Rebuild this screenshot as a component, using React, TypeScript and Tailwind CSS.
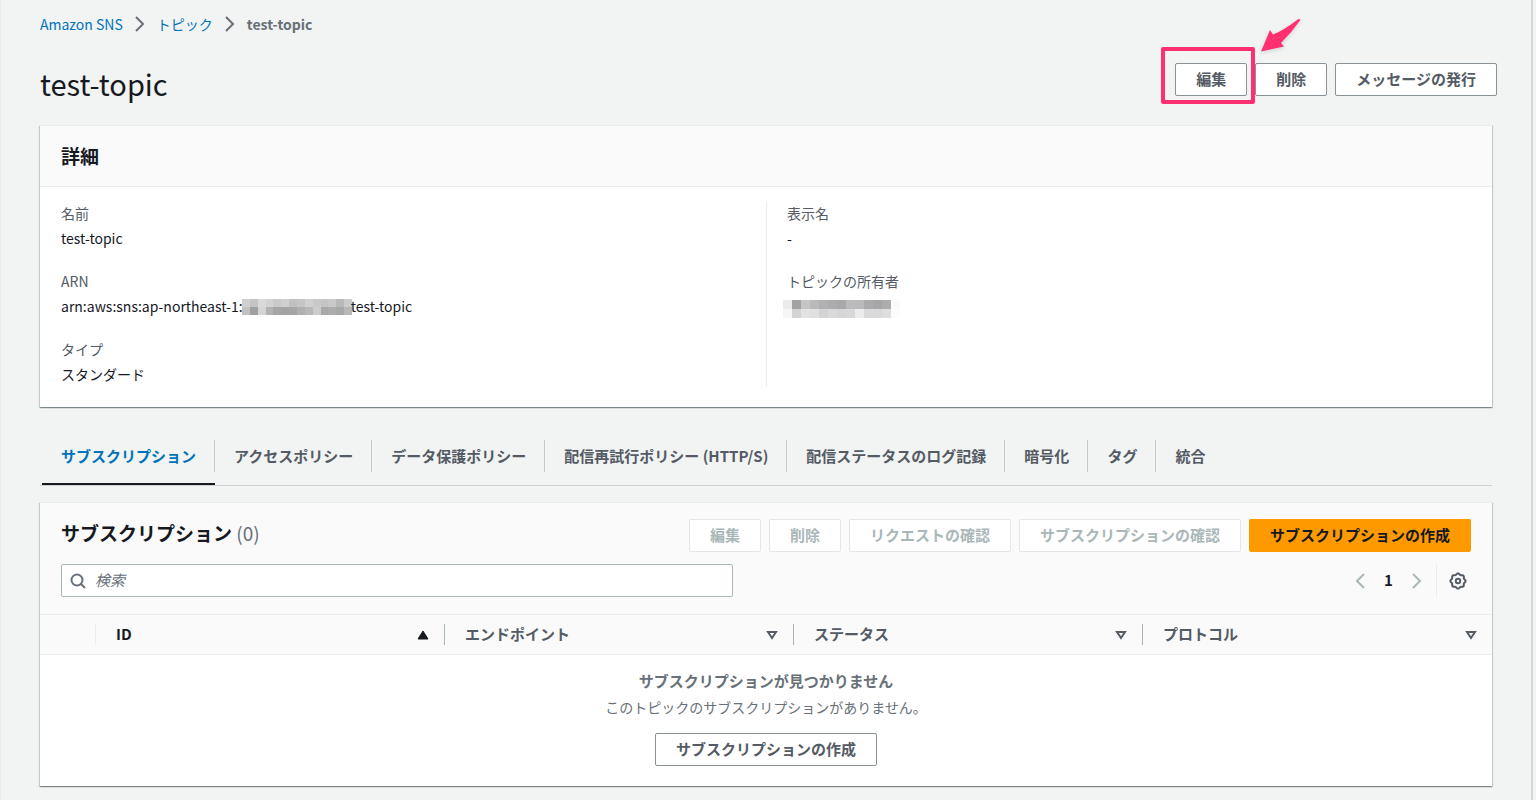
import React from "react";

const BUTTON =
  "flex h-[33px] items-center rounded-xs border px-5 pb-[2px] text-[15px] leading-5 font-bold whitespace-nowrap";
const NORMAL = "border-[#879196] bg-white text-[#545b64]";
const DISABLED = "border-[#e3e7e8] bg-white text-[#aab7b8]";
const PRIMARY = "border-[#ff9900] bg-[#ff9900] text-[#16191f]";

function Button({
  kind = "normal",
  children,
}: {
  kind?: "normal" | "disabled" | "primary";
  children: React.ReactNode;
}) {
  const look = kind === "primary" ? PRIMARY : kind === "disabled" ? DISABLED : NORMAL;
  return (
    <button type="button" disabled={kind === "disabled"} className={`${BUTTON} ${look}`}>
      {children}
    </button>
  );
}

function Chevron({ left = false, className }: { left?: boolean; className: string }) {
  return (
    <svg viewBox="0 0 10 16" className={className} fill="none" stroke="currentColor" strokeWidth="2" aria-hidden="true">
      <path d={left ? "M9 1 L2 8 L9 15" : "M1 1 L8 8 L1 15"} />
    </svg>
  );
}

// Closed outline of a wheel with eight rounded teeth.
const GEAR_OUTLINE =
  Array.from({ length: 72 }, (_, i) => {
    const angle = (i / 72) * Math.PI * 2;
    const radius = 7 + 0.6 * Math.cos(8 * angle);
    const x = 9 + radius * Math.cos(angle);
    const y = 9 + radius * Math.sin(angle);
    return `${i === 0 ? "M" : "L"}${x.toFixed(2)} ${y.toFixed(2)}`;
  }).join(" ") + " Z";

function Mosaic({ rows, cell, className }: { rows: string[][]; cell: number; className: string }) {
  return (
    <svg
      viewBox={`0 0 ${rows[0].length * cell} ${rows.length * cell}`}
      preserveAspectRatio="none"
      className={className}
      shapeRendering="crispEdges"
      aria-hidden="true"
    >
      {rows.map((row, y) =>
        row.map((fill, x) => (
          <rect key={`${x}-${y}`} x={x * cell} y={y * cell} width={cell} height={cell} fill={fill} />
        )),
      )}
    </svg>
  );
}

const ARN_MASK = [
  ["#d0d0d0", "#c4c4c4", "#d9d9d9", "#d2d2d2", "#cacaca", "#d0d0d0", "#c0c0c0", "#c5c5c5", "#d0d0d0", "#c9c9c9", "#c4c4c4", "#c9c9c9", "#b9b9b9", "#cccccc"],
  ["#c2c2c2", "#a0a0a0", "#d5d5d5", "#b3b3b3", "#a6a6a6", "#a3a3a3", "#a5a5a5", "#b0b0b0", "#b8b8b8", "#cccccc", "#a9a9a9", "#acacac", "#a8a8a8", "#b8b8b8"],
];
const OWNER_MASK = [
  ["#ebebeb", "#a3a3a5", "#c5c5c6", "#b9b9bb", "#b1b1b3", "#acacae", "#a9a9ab", "#bbbbbd", "#bababc", "#ababad", "#a6a6a8", "#adadaf", "#fafafa"],
  ["#f6f6f6", "#d4d4d4", "#e2e4e3", "#e0e0e0", "#d3d3d5", "#dadada", "#d6d6d6", "#d8d8da", "#ececec", "#dadada", "#d9d9d9", "#dedede", "#fcfcfc"],
];

function Field({ label, children }: { label: string; children: React.ReactNode }) {
  return (
    <div className="text-sm leading-[25px]">
      <dt className="text-[#545b64]">{label}</dt>
      <dd className="flex h-[25px] items-center text-[#16191f]">{children}</dd>
    </div>
  );
}

const TABS = [
  "サブスクリプション",
  "アクセスポリシー",
  "データ保護ポリシー",
  "配信再試行ポリシー (HTTP/S)",
  "配信ステータスのログ記録",
  "暗号化",
  "タグ",
  "統合",
];

const COLUMNS = ["ID", "エンドポイント", "ステータス", "プロトコル"];

const PANEL =
  "border-t border-[#eaeded] bg-white shadow-[0_1px_1px_0_rgba(0,28,36,0.3),1px_1px_1px_0_rgba(0,28,36,0.15),-1px_1px_1px_0_rgba(0,28,36,0.15)]";

export default function App() {
  return (
    <div className="min-h-screen border-l border-[#e9ebeb] bg-[#f2f3f3] pr-[3px] font-['Noto_Sans_CJK_JP',sans-serif] text-[15px]">
      <main className="min-h-screen border-r-2 border-[#d5d8d9] pt-3 pr-[39px] pb-3 pl-[39px]">
        <nav aria-label="breadcrumb">
          <ol className="flex items-center text-sm leading-6">
            <li><a href="#sns" className="text-[#0073bb]">Amazon SNS</a></li>
            <li className="px-3 text-[#687078]"><Chevron className="h-4 w-[10px]" /></li>
            <li><a href="#topics" className="text-[#0073bb]">トピック</a></li>
            <li className="px-3 text-[#687078]"><Chevron className="h-4 w-[10px]" /></li>
            <li className="font-bold text-[#687078]">test-topic</li>
          </ol>
        </nav>

        <header className="-mr-[5px] flex items-start justify-between pt-[27px]">
          <h1 className="text-[29px] leading-10 text-[#16191f]">test-topic</h1>
          <div className="flex gap-2">
            <div className="relative flex">
              <Button>編集</Button>
              <span className="pointer-events-none absolute -top-4 -right-2 -bottom-2 -left-[14px] z-10 rounded-xs border-4 border-[#ff2f70]" />
              <svg viewBox="0 0 44 38" className="pointer-events-none absolute -top-[47px] -right-[57px] h-[38px] w-11 drop-shadow-sm" aria-hidden="true">
                <path d="M1 35.5 L10 14 L13 18.5 Q22 15.5 38.5 3 Q40.5 2.5 40 4.5 Q32 16 21 27 L24 30.5 Z" fill="#ff2f70" />
              </svg>
            </div>
            <Button>削除</Button>
            <Button>メッセージの発行</Button>
          </div>
        </header>

        <section className={`${PANEL} mt-[22px]`} aria-labelledby="details">
          <div className="border-b border-[#eaeded] bg-[#fafafa] px-[21px] py-4">
            <h2 id="details" className="text-[19px] leading-7 font-bold text-[#16191f]">詳細</h2>
          </div>
          <div className="grid grid-cols-2 px-[21px] pt-[14px] pb-5">
            <dl className="flex flex-col gap-[18px]">
              <Field label="名前">test-topic</Field>
              <Field label="ARN">
                arn:aws:sns:ap-northeast-1:
                <Mosaic rows={ARN_MASK} cell={8} className="-mx-px h-4 w-[110px]" />
                test-topic
              </Field>
              <Field label="タイプ">スタンダード</Field>
            </dl>
            <dl className="flex flex-col gap-[18px] border-l border-[#eaeded] pl-5">
              <Field label="表示名">-</Field>
              <Field label="トピックの所有者">
                <Mosaic rows={OWNER_MASK} cell={9} className="mt-1 -ml-1 h-[18px] w-[117px]" />
              </Field>
            </dl>
          </div>
        </section>

        <div role="tablist" className="mt-[33px] flex border-b border-[#cdd3d4] pl-[2px]">
          {TABS.map((tab, i) => (
            <div
              key={tab}
              className={`relative h-[45px] ${i === 0 ? "after:absolute after:inset-x-0 after:bottom-0 after:h-[2px] after:bg-[#16191f]" : ""}`}
            >
              <button
                type="button"
                role="tab"
                aria-selected={i === 0}
                className={`h-8 pr-[18px] pl-[19px] font-bold whitespace-nowrap ${i === 0 ? "text-[#0073bb]" : "text-[#545b64]"} ${i < TABS.length - 1 ? "border-r border-[#c3cacb]" : ""}`}
              >
                {tab}
              </button>
            </div>
          ))}
        </div>

        <section className={`${PANEL} mt-4`} aria-labelledby="subscriptions">
          <div className="bg-[#fafafa] px-[21px] pt-4 pb-[17px]">
            <div className="flex items-start justify-between">
              <h2 id="subscriptions" className="text-[19px] leading-7 font-bold text-[#16191f]">
                サブスクリプション <span className="font-normal text-[#687078]">(0)</span>
              </h2>
              <div className="flex gap-2">
                <Button kind="disabled">編集</Button>
                <Button kind="disabled">削除</Button>
                <Button kind="disabled">リクエストの確認</Button>
                <Button kind="disabled">サブスクリプションの確認</Button>
                <Button kind="primary">サブスクリプションの作成</Button>
              </div>
            </div>
            <div className="mt-3 flex items-center justify-between">
              <div className="flex h-[33px] w-[672px] items-center gap-[9px] rounded-xs border border-[#aab7b8] bg-white px-2">
                <svg viewBox="0 0 16 16" className="size-4 text-[#687078]" fill="none" stroke="currentColor" strokeWidth="2" aria-hidden="true">
                  <circle cx="7" cy="7" r="5.5" />
                  <path d="M11 11 L15 15" />
                </svg>
                <input type="search" aria-label="検索" placeholder="検索" className="min-w-0 flex-1 outline-none placeholder:text-[#687078] placeholder:italic" />
              </div>
              <div className="flex items-center">
                <button type="button" aria-label="前のページ" disabled className="text-[#aab7b8]">
                  <Chevron left className="h-4 w-[10px]" />
                </button>
                <button type="button" className="w-[47px] font-bold text-[#16191f]">1</button>
                <button type="button" aria-label="次のページ" disabled className="text-[#aab7b8]">
                  <Chevron className="h-4 w-[10px]" />
                </button>
                <span className="ml-[14px] h-[33px] border-l border-[#eaeded]" />
                <button type="button" aria-label="設定" className="ml-3 pr-1 text-[#545b64]">
                  <svg viewBox="0 0 18 18" className="size-[18px]" fill="none" stroke="currentColor" strokeWidth="2" strokeLinejoin="round" aria-hidden="true">
                    <path d={GEAR_OUTLINE} />
                    <circle cx="9" cy="9" r="2.2" />
                  </svg>
                </button>
              </div>
            </div>
          </div>
          <table className="w-full table-fixed border-collapse">
            <thead>
              <tr className="h-10 border-y border-[#eaeded] bg-[#fafafa]">
                <td className="w-14 p-0">
                  <div className="h-[21px] border-r border-[#eaeded]" />
                </td>
                {COLUMNS.map((name, i) => (
                  <th key={name} scope="col" className="p-0 text-left font-bold">
                    <div
                      className={`flex h-[21px] items-center justify-between pr-[15px] pl-5 ${i < COLUMNS.length - 1 ? "border-r border-[#aab7b8]" : ""} ${i === 0 ? "text-[#16191f]" : "text-[#545b64]"}`}
                    >
                      {name}
                      <svg viewBox="0 0 12 10" className="h-[10px] w-3" aria-hidden="true">
                        {i === 0 ? (
                          <path d="M6 1 L11 9 L1 9 Z" fill="currentColor" stroke="currentColor" strokeLinejoin="round" />
                        ) : (
                          <path d="M2 2 L10 2 L6 8 Z" fill="none" stroke="currentColor" strokeWidth="2" />
                        )}
                      </svg>
                    </div>
                  </th>
                ))}
              </tr>
            </thead>
            <tbody>
              <tr>
                <td colSpan={5} className="px-5 pt-3 pb-5 text-center leading-[27px] text-[#687078]">
                  <p className="font-bold">サブスクリプションが見つかりません</p>
                  <p className="mb-3 text-sm leading-[27px]">このトピックのサブスクリプションがありません。</p>
                  <div className="flex justify-center">
                    <Button>サブスクリプションの作成</Button>
                  </div>
                </td>
              </tr>
            </tbody>
          </table>
        </section>
      </main>
    </div>
  );
}
